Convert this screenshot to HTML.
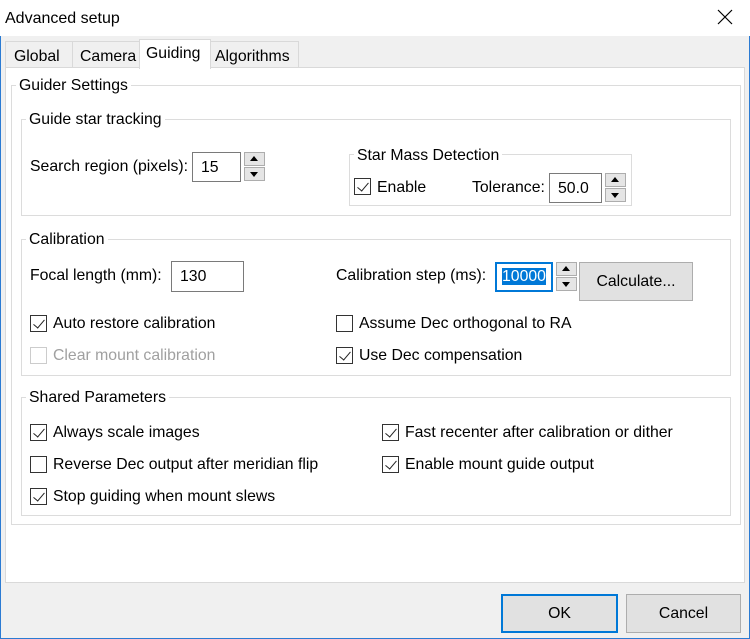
<!DOCTYPE html><html><head><style>
*{margin:0;padding:0;box-sizing:border-box}
body{width:750px;height:639px;background:#f0f0f0;font-family:"Liberation Sans",sans-serif;font-size:15.8px;color:#000;position:relative;overflow:hidden}
.a{position:absolute;white-space:nowrap}
.t{line-height:24px}
.g{position:absolute;border:1px solid #dcdcdc}
.gl{position:absolute;background:#fff;padding:0 3px;line-height:22px}
.in{position:absolute;background:#fff;border:1px solid #7a7a7a;padding-left:8px;line-height:30px}
.sp{position:absolute;width:21px}
.sp div{height:14px;background:#e5e5e5;border:1px solid #adadad;margin-bottom:1px;position:relative}
.sp div:after{content:"";position:absolute;left:5px;border-left:4px solid transparent;border-right:4px solid transparent}
.sp .u:after{top:3px;border-bottom:5px solid #000}
.sp .d:after{top:4px;border-top:5px solid #000}
.cb{position:absolute;width:17px;height:17px;border:1px solid #333;background:#fff}
.cb.c:after{content:"";position:absolute;left:5px;top:1px;width:5px;height:10px;border-right:1.5px solid #222;border-bottom:1.5px solid #222;transform:rotate(40deg)}
.cb.dis{border-color:#ccc}
.btn{position:absolute;background:#e1e1e1;border:1px solid #adadad;text-align:center}
</style></head><body>
<div class="a" style="left:0;top:0;width:750px;height:36px;background:#fff"></div>
<div class="a" style="left:0;top:36px;width:1px;height:603px;background:#2b7bd3"></div>
<div class="a" style="right:0;top:36px;width:1px;height:603px;background:#2b7bd3"></div>
<div class="a" style="left:0;bottom:0;width:750px;height:1px;background:#2b7bd3"></div>
<div class="a" style="left:5px;top:8px;font-size:16px;line-height:22px">Advanced setup</div>
<svg class="a" style="left:717px;top:9px" width="16" height="16"><path d="M1 1L15 15M15 1L1 15" stroke="#000" stroke-width="1.2"/></svg>
<div class="a" style="left:5px;top:41px;width:68px;height:27px;border:1px solid #d9d9d9;padding:4px 0 0 8px;line-height:22px">Global</div>
<div class="a" style="left:72px;top:41px;width:68px;height:27px;border:1px solid #d9d9d9;padding:4px 0 0 7px;line-height:22px">Camera</div>
<div class="a" style="left:210px;top:41px;width:89px;height:27px;border:1px solid #d9d9d9;padding:4px 0 0 4px;line-height:22px">Algorithms</div>
<div class="a" style="left:5px;top:67px;width:740px;height:516px;background:#fff;border:1px solid #d9d9d9"></div>
<div class="a" style="left:139px;top:39px;width:72px;height:30px;background:#fff;border:1px solid #d9d9d9;border-bottom:none;padding:3px 0 0 6px;line-height:22px">Guiding</div>
<div class="g" style="left:11px;top:85px;width:730px;height:440px"></div>
<div class="gl" style="left:16px;top:75px">Guider Settings</div>
<div class="g" style="left:21px;top:119px;width:710px;height:97px"></div>
<div class="gl" style="left:26px;top:109px">Guide star tracking</div>
<div class="a t" style="left:30px;top:155px">Search region (pixels):</div>
<div class="in" style="left:192px;top:152px;width:49px;height:30px">15</div>
<div class="sp" style="left:244px;top:152px"><div class="u"></div><div class="d"></div></div>
<div class="g" style="left:349px;top:154px;width:283px;height:52px"></div>
<div class="gl" style="left:354px;top:145px">Star Mass Detection</div>
<div class="cb c" style="left:354px;top:178px"></div>
<div class="a t" style="left:377px;top:176px">Enable</div>
<div class="a t" style="left:472px;top:176px">Tolerance:</div>
<div class="in" style="left:549px;top:173px;width:53px;height:30px">50.0</div>
<div class="sp" style="left:605px;top:173px"><div class="u"></div><div class="d"></div></div>
<div class="g" style="left:21px;top:239px;width:710px;height:137px"></div>
<div class="gl" style="left:26px;top:229px">Calibration</div>
<div class="a t" style="left:30px;top:264px">Focal length (mm):</div>
<div class="in" style="left:171px;top:261px;width:73px;height:31px">130</div>
<div class="a t" style="left:336px;top:264px">Calibration step (ms):</div>
<div class="in" style="left:495px;top:262px;width:58px;height:30px;border:2px solid #0078d7;padding-left:5px;line-height:26px"><span style="background:#0078d7;color:#fff">10000</span></div>
<div class="sp" style="left:556px;top:262px"><div class="u"></div><div class="d"></div></div>
<div class="btn" style="left:579px;top:262px;width:114px;height:39px;line-height:38px">Calculate...</div>
<div class="cb c" style="left:30px;top:315px"></div><div class="a t" style="left:53px;top:312px">Auto restore calibration</div>
<div class="cb dis" style="left:30px;top:347px"></div><div class="a t" style="left:53px;top:344px;color:#a0a0a0">Clear mount calibration</div>
<div class="cb" style="left:336px;top:315px"></div><div class="a t" style="left:359px;top:312px">Assume Dec orthogonal to RA</div>
<div class="cb c" style="left:336px;top:347px"></div><div class="a t" style="left:359px;top:344px">Use Dec compensation</div>
<div class="g" style="left:21px;top:397px;width:710px;height:119px"></div>
<div class="gl" style="left:26px;top:387px">Shared Parameters</div>
<div class="cb c" style="left:30px;top:424px"></div><div class="a t" style="left:53px;top:421px">Always scale images</div>
<div class="cb" style="left:30px;top:456px"></div><div class="a t" style="left:53px;top:453px">Reverse Dec output after meridian flip</div>
<div class="cb c" style="left:30px;top:488px"></div><div class="a t" style="left:53px;top:485px">Stop guiding when mount slews</div>
<div class="cb c" style="left:382px;top:424px"></div><div class="a t" style="left:405px;top:421px">Fast recenter after calibration or dither</div>
<div class="cb c" style="left:382px;top:456px"></div><div class="a t" style="left:405px;top:453px">Enable mount guide output</div>
<div class="btn" style="left:501px;top:594px;width:117px;height:39px;border:2px solid #0078d7;line-height:36px">OK</div>
<div class="btn" style="left:626px;top:594px;width:115px;height:39px;line-height:38px">Cancel</div>
</body></html>
